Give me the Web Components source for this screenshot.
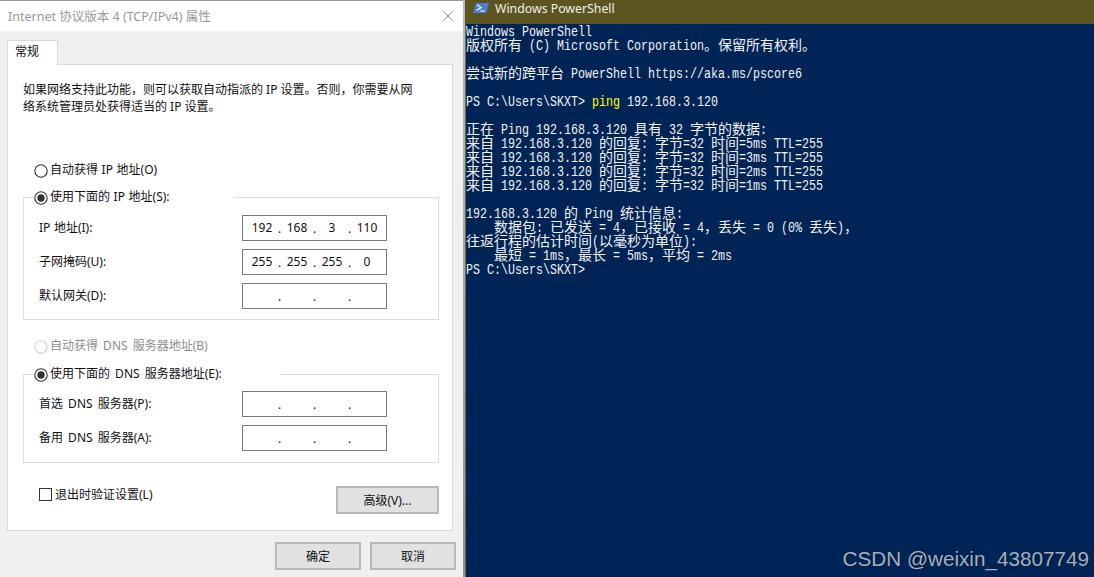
<!DOCTYPE html>
<html lang="zh">
<head>
<meta charset="utf-8">
<title>Internet 协议版本 4 属性 / Windows PowerShell</title>
<style>
html,body{margin:0;padding:0;height:577px;overflow:hidden;background:#012456}
body{font:12px "Noto Sans","Noto Sans CJK SC",sans-serif;color:#111}
</style>
</head>
<body>
<desk-top>
  <ip-dialog slot="left" heading="Internet 协议版本 4 (TCP/IPv4) 属性" tab="常规">
    <info-text>如果网络支持此功能，则可以获取自动指派的 IP 设置。否则，你需要从网<br>络系统管理员处获得适当的 IP 设置。</info-text>
    <radio-option style="margin-top:47px;word-spacing:.5px">自动获得 IP 地址(O)</radio-option>
    <group-box style="margin-top:19px;padding-bottom:10px;word-spacing:.5px" legend-width="200">
      <radio-option slot="legend" checked>使用下面的 IP 地址(S):</radio-option>
      <ip-row label="IP 地址(I):" value="192,168,3,110"></ip-row>
      <ip-row label="子网掩码(U):" value="255,255,255,0"></ip-row>
      <ip-row label="默认网关(D):"></ip-row>
    </group-box>
    <radio-option style="margin-top:18px;word-spacing:2px" disabled>自动获得 DNS 服务器地址(B)</radio-option>
    <group-box style="margin-top:20px;padding-top:16px;padding-bottom:11px;word-spacing:2px" legend-width="247">
      <radio-option slot="legend" checked>使用下面的 DNS 服务器地址(E):</radio-option>
      <ip-row label="首选 DNS 服务器(P):"></ip-row>
      <ip-row label="备用 DNS 服务器(A):"></ip-row>
    </group-box>
    <action-row>
      <check-option slot="start">退出时验证设置(L)</check-option>
      <win-button slot="end" style="width:103px">高级(V)...</win-button>
    </action-row>
    <win-button slot="footer" style="width:86px">确定</win-button>
    <win-button slot="footer" style="width:86px">取消</win-button>
  </ip-dialog>
  <ps-window slot="right" heading="Windows PowerShell">
    <ps-line>Windows PowerShell</ps-line>
    <ps-line>版权所有 (C) Microsoft Corporation。保留所有权利。</ps-line>
    <ps-line></ps-line>
    <ps-line>尝试新的跨平台 PowerShell https://aka.ms/pscore6</ps-line>
    <ps-line></ps-line>
    <ps-line highlight="ping">PS C:\Users\SKXT> ping 192.168.3.120</ps-line>
    <ps-line></ps-line>
    <ps-line>正在 Ping 192.168.3.120 具有 32 字节的数据:</ps-line>
    <ps-line>来自 192.168.3.120 的回复: 字节=32 时间=5ms TTL=255</ps-line>
    <ps-line>来自 192.168.3.120 的回复: 字节=32 时间=3ms TTL=255</ps-line>
    <ps-line>来自 192.168.3.120 的回复: 字节=32 时间=2ms TTL=255</ps-line>
    <ps-line>来自 192.168.3.120 的回复: 字节=32 时间=1ms TTL=255</ps-line>
    <ps-line></ps-line>
    <ps-line>192.168.3.120 的 Ping 统计信息:</ps-line>
    <ps-line>    数据包: 已发送 = 4，已接收 = 4，丢失 = 0 (0% 丢失)，</ps-line>
    <ps-line>往返行程的估计时间(以毫秒为单位):</ps-line>
    <ps-line>    最短 = 1ms，最长 = 5ms，平均 = 2ms</ps-line>
    <ps-line>PS C:\Users\SKXT></ps-line>
    <water-mark slot="overlay">CSDN @weixin_43807749</water-mark>
  </ps-window>
</desk-top>
<script>
function comp(name, html, init){
  customElements.define(name, class extends HTMLElement{
    constructor(){super();this.attachShadow({mode:'open'}).innerHTML=html;}
    connectedCallback(){ if(init) init.call(this,this.shadowRoot); }
  });
}
comp('desk-top',`<style>
:host{display:flex;width:1094px;height:577px}
.split{width:2px;background:linear-gradient(#b9b9b9,#8f8f8f);flex:none}
</style><slot name="left"></slot><div class="split"></div><slot name="right"></slot>`);

comp('ip-dialog',`<style>
:host{display:flex;flex-direction:column;width:463px;height:577px;box-sizing:border-box;background:#f0f0f0;border-top:1px solid #9a9a9a;flex:none}
.title{height:30px;background:#fff;display:flex;align-items:center;justify-content:space-between;padding:0 10px 0 8px;color:#999;font-size:12.5px}
.title span{position:relative;top:-1px}
.body{padding:9px 10px 0 7px;flex:1;display:flex;flex-direction:column}
.tab{width:51px;height:25px;box-sizing:border-box;background:#fff;border:1px solid #d9d9d9;border-bottom:0;padding-left:7px;line-height:21px;margin-bottom:-1px;position:relative;z-index:1}
.pane{background:#fff;border:1px solid #d9d9d9;padding:0 13px 16px 15px;height:467px;box-sizing:border-box}
.foot{display:flex;justify-content:flex-end;gap:9px;margin:11px -3px 0 0}
svg{display:block}
</style>
<div class="title"><span id="h"></span>
<svg width="10" height="10" viewBox="0 0 10 10"><path d="M0 0l10 10M10 0L0 10" stroke="#949494" stroke-width="1" fill="none"/></svg></div>
<div class="body"><div class="tab" id="t"></div><div class="pane"><slot></slot></div>
<div class="foot"><slot name="footer"></slot></div></div>`,
function(s){s.getElementById('h').textContent=this.getAttribute('heading');s.getElementById('t').textContent=this.getAttribute('tab');});

comp('info-text',`<style>:host{display:block;margin-top:16px;line-height:17px;color:#111}</style><slot></slot>`);

comp('radio-option',`<style>
:host{display:flex;align-items:center;gap:2px;height:16px;padding-left:11px}
:host([slot=legend]){padding-left:0}
svg{flex:none;position:relative;top:1px}
span{position:relative;top:-1px;white-space:nowrap}
:host([disabled]){color:#8d8d8d}
</style><svg width="14" height="14" viewBox="0 0 14 14"><circle cx="7" cy="7" r="6.2" fill="#fff" stroke="#333" stroke-width="1.1" id="c"/><circle id="d" cx="7" cy="7" r="3.7" fill="#333" display="none"/></svg><span><slot></slot></span>`,
function(s){ if(this.hasAttribute('checked')) s.getElementById('d').removeAttribute('display');
 if(this.hasAttribute('disabled')) s.getElementById('c').setAttribute('stroke','#cfcfcf');});

comp('group-box',`<style>
:host{display:block;position:relative;border:1px solid #dcdcdc;padding:17px 51px 0 15px;box-sizing:border-box}
.legend{position:absolute;left:10px;top:-9px;height:16px;background:#fff}
</style><div class="legend" id="l"><slot name="legend"></slot></div><slot></slot>`,
function(s){s.getElementById('l').style.width=this.getAttribute('legend-width')+'px';});

comp('ip-row',`<style>
:host{display:flex;justify-content:space-between;align-items:center;height:26px;margin-bottom:8px}
:host(:last-of-type){margin-bottom:0}
#lb{position:relative;top:-1px}
.box{width:145px;height:26px;box-sizing:border-box;border:1px solid #7a7a7a;background:#fff;display:flex;padding-left:5px;align-items:center;color:#111;font-size:12px}
.o{width:28px;text-align:center;position:relative;top:-1px}
.p{width:7px;text-align:center;position:relative;top:0px}
</style><span id="lb"></span><div class="box" id="b"></div>`,
function(s){s.getElementById('lb').textContent=this.getAttribute('label');
 const v=(this.getAttribute('value')||',,,').split(','),b=s.getElementById('b');
 v.forEach((x,i)=>{const o=document.createElement('span');o.className='o';o.textContent=x;b.append(o);
  if(i<3){const p=document.createElement('span');p.className='p';p.textContent='.';b.append(p);}});});

comp('action-row',`<style>:host{display:flex;justify-content:space-between;align-items:flex-start;margin-top:23px;padding-left:16px}</style><slot name="start"></slot><slot name="end"></slot>`);

comp('check-option',`<style>
:host{display:flex;align-items:center;gap:3px;height:16px;white-space:nowrap}
i{display:block;width:13px;height:13px;box-sizing:border-box;border:1px solid #333;background:#fff}
</style><i></i><slot></slot>`);

comp('win-button',`<style>
:host{display:flex;align-items:center;justify-content:center;height:28px;box-sizing:border-box;background:#e1e1e1;border:2px solid #b8b8b8;color:#111}
</style><slot></slot>`);

comp('ps-window',`<style>
:host{display:flex;flex-direction:column;flex:1;min-width:0;height:577px;position:relative;background:#012456;border-left:1px solid #6f6a3a;box-sizing:border-box}
.bar{height:24px;flex:none;background:#5d551f;display:flex;align-items:center;gap:6px;padding-left:8px;margin-left:-1px;color:#eee;font-size:12.3px}
.bar span{position:relative;top:-4px}
.bar svg{position:relative;top:-4px}
.con{flex:1;color:#f2f2f2}
</style>
<div class="bar"><svg width="16" height="10" viewBox="0 0 16 10"><path d="M3 0H16L13 10H0Z" fill="#4a7fd4"/><path d="M4 1.8L8.2 4.6L3.6 7.2" stroke="#fff" stroke-width="1.2" fill="none"/><path d="M7.5 8H11.5" stroke="#fff" stroke-width="1.1"/></svg><span id="h"></span></div>
<div class="con"><slot></slot></div><slot name="overlay"></slot>`,
function(s){s.getElementById('h').textContent=this.getAttribute('heading');});

comp('ps-line',`<style>
:host{display:block;height:14px;line-height:14px;font:14px/14px "Noto Sans CJK SC",sans-serif;white-space:pre}
#r{display:block;position:relative;top:-1px;height:14px}
.l{display:inline-block;font-family:"Liberation Mono",monospace;transform:scaleX(.8333);transform-origin:0 0;vertical-align:baseline}
.y{color:#ffff00}
</style><span id="r"></span>`,
function(s){
  const r=s.getElementById('r'),hl=this.getAttribute('highlight');
  const txt=this.textContent;
  const add=(t,c)=>{const e=document.createElement('span');if(c)e.className=c;e.textContent=t;r.append(e);};
  const lat=(t,c)=>{if(!t)return;const e=document.createElement('span');e.className='l'+(c?' '+c:'');e.style.width=(t.length*7)+'px';e.textContent=t;r.append(e);};
  txt.split(/([\u3000-\u9fff\uff00-\uffef]+)/).forEach((part,i)=>{
    if(!part)return;
    if(i%2)return add(part);
    if(hl&&part.includes(hl)){const k=part.indexOf(hl);lat(part.slice(0,k));lat(hl,'y');lat(part.slice(k+hl.length));}
    else lat(part);
  });
});

comp('water-mark',`<style>
:host{position:absolute;right:5px;bottom:6px;font:20.7px "Liberation Sans",sans-serif;color:#a3afbe;text-shadow:1px 1px 1px #0a1c3c;white-space:nowrap}
</style><slot></slot>`);
</script>
</body>
</html>
